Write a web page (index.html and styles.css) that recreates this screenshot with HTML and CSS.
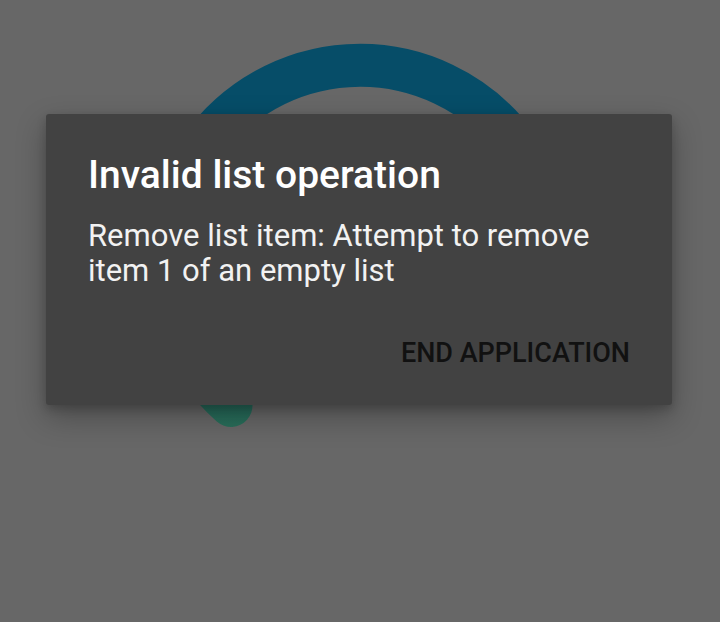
FILE: index.html
```html
<!DOCTYPE html>
<html lang="en">
<head>
<meta charset="utf-8">
<title>Invalid list operation</title>
<link rel="stylesheet" href="styles.css">
</head>
<body>
  <div class="screen">
    <!-- progress ring of the app, dimmed behind the dialog -->
    <svg class="ring" width="720" height="622" viewBox="0 0 720 622" aria-hidden="true">
      <defs>
        <linearGradient id="ringFill" x1="0" y1="44" x2="0" y2="430" gradientUnits="userSpaceOnUse">
          <stop offset="0" stop-color="#064d68"/>
          <stop offset="0.45" stop-color="#064d68"/>
          <stop offset="1" stop-color="#2a6e59"/>
        </linearGradient>
      </defs>
      <path d="M 231 405.5 A 194.5 194.5 0 1 1 551.5 226.2" fill="none" stroke="url(#ringFill)" stroke-width="43" stroke-linecap="round"/>
    </svg>
  </div>

  <div class="overlay">
    <div class="dialog" role="alertdialog" aria-labelledby="dlg-title">
      <h1 class="dialog-title" id="dlg-title">Invalid list operation</h1>
      <p class="dialog-message">Remove list item: Attempt to remove item 1 of an empty list</p>
      <div class="dialog-actions">
        <button class="dialog-button" type="button">End application</button>
      </div>
    </div>
  </div>
</body>
</html>
```

FILE: styles.css
```css
html, body {
  margin: 0;
  padding: 0;
}

body {
  width: 720px;
  height: 622px;
  overflow: hidden;
  background: #676767;
  font-family: Roboto, "Noto Sans", sans-serif;
  position: relative;
}

.screen {
  position: absolute;
  inset: 0;
}

.ring {
  display: block;
}

.overlay {
  position: absolute;
  inset: 0;
  display: flex;
  justify-content: center;
  align-items: flex-start;
  padding: 114px 48px 0 46px;
}

.dialog {
  flex: 1;
  background: #424242;
  border-radius: 3px;
  box-shadow: 0 12px 30px rgba(0, 0, 0, 0.28), 0 4px 10px rgba(0, 0, 0, 0.18);
  padding: 38px 42px 36px 42px;
  box-sizing: border-box;
  height: 291px;
  display: flex;
  flex-direction: column;
}

.dialog-title {
  margin: 0;
  font-size: 39px;
  font-weight: 500;
  line-height: normal;
  color: #ffffff;
}

.dialog-message {
  margin: 20px 0 0;
  font-size: 31px;
  line-height: 35px;
  color: #f2f2f2;
}

.dialog-actions {
  margin-top: auto;
  display: flex;
  justify-content: flex-end;
}

.dialog-button {
  border: 0;
  background: none;
  padding: 0;
  font-family: inherit;
  font-size: 27px;
  font-weight: 500;
  line-height: normal;
  text-transform: uppercase;
  color: #111111;
  cursor: pointer;
}
```
